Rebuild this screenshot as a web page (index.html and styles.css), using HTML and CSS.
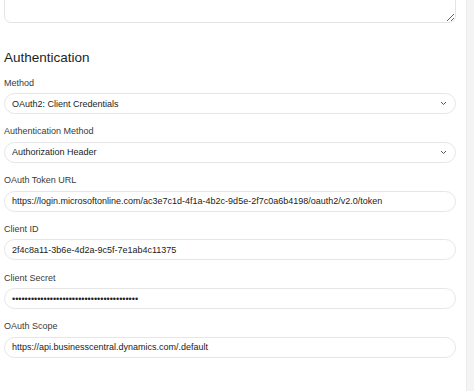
FILE: index.html
```html
<!DOCTYPE html>
<html lang="en">
<head>
  <meta charset="UTF-8" />
  <meta name="viewport" content="width=device-width, initial-scale=1" />
  <title>Connection settings</title>
  <link rel="stylesheet" href="styles.css">
</head>
<body>
<div class="page">
  <main class="content">
    <textarea class="notes"></textarea>

    <h2 class="section-title">Authentication</h2>

    <div class="field">
      <label class="field-label" for="method">Method</label>
      <div class="select-wrapper">
        <select id="method" class="field-input">
          <option>OAuth2: Client Credentials</option>
        </select>
        <svg class="chevron" width="7" height="5" viewBox="0 0 7 5"><path d="M1 1l2.5 2.5L6 1" /></svg>
      </div>
    </div>

    <div class="field">
      <label class="field-label" for="authMethod">Authentication Method</label>
      <div class="select-wrapper">
        <select id="authMethod" class="field-input">
          <option>Authorization Header</option>
        </select>
        <svg class="chevron" width="7" height="5" viewBox="0 0 7 5"><path d="M1 1l2.5 2.5L6 1" /></svg>
      </div>
    </div>

    <div class="field">
      <label class="field-label" for="tokenUrl">OAuth Token URL</label>
      <input type="text" id="tokenUrl" class="field-input" value="https://login.microsoftonline.com/ac3e7c1d-4f1a-4b2c-9d5e-2f7c0a6b4198/oauth2/v2.0/token">
    </div>

    <div class="field">
      <label class="field-label" for="clientId">Client ID</label>
      <input type="text" id="clientId" class="field-input" value="2f4c8a11-3b6e-4d2a-9c5f-7e1ab4c11375">
    </div>

    <div class="field">
      <label class="field-label" for="clientSecret">Client Secret</label>
      <input type="password" id="clientSecret" class="field-input" value="abcdefghijabcdefghijabcdefghijabcdefghij">
    </div>

    <div class="field">
      <label class="field-label" for="scope">OAuth Scope</label>
      <input type="text" id="scope" class="field-input" value="https://api.businesscentral.dynamics.com/.default">
    </div>
  </main>
  <div class="scroll-track"></div>
</div>
</body>
</html>
```

FILE: styles.css
```css
body {
  margin: 0;
  background: #fff;
  font-family: "Liberation Sans", Arial, sans-serif;
  color: #222;
}

.page {
  display: flex;
  min-height: 100vh;
  overflow: hidden;
}

.content {
  flex: 1;
  padding: 0 10px 0 4px;
}

.scroll-track {
  width: 7px;
  background: #f4f4f4;
  border-left: 1px solid #ececec;
}

/* textarea cut off by the top of the window */
.notes {
  display: block;
  width: 100%;
  height: 63px;
  margin: -40px 0 0 0;
  box-sizing: border-box;
  border: 1px solid #e4e4e4;
  border-radius: 7px;
  background: #fff;
  font-family: inherit;
}

.section-title {
  margin: 26px 0 9.5px 0;
  font-size: 13.5px;
  line-height: 18px;
  font-weight: 400;
  color: #1e1e1e;
}

.field {
  margin-bottom: 11.25px;
}

.field-label {
  display: block;
  font-size: 9px;
  line-height: 12px;
  color: #3a3a3a;
  margin-bottom: 4.5px;
}

.field-input {
  display: block;
  width: 100%;
  height: 21px;
  box-sizing: border-box;
  padding: 0 7px;
  border: 1px solid #e6e6e6;
  border-radius: 10.5px;
  background: #fff;
  font-family: inherit;
  font-size: 9px;
  color: #222;
  outline: none;
}

select.field-input {
  appearance: none;
  -webkit-appearance: none;
}

.select-wrapper {
  position: relative;
}

.chevron {
  position: absolute;
  right: 9px;
  top: 8px;
  fill: none;
  stroke: #555;
  stroke-width: 1;
  pointer-events: none;
}
```
